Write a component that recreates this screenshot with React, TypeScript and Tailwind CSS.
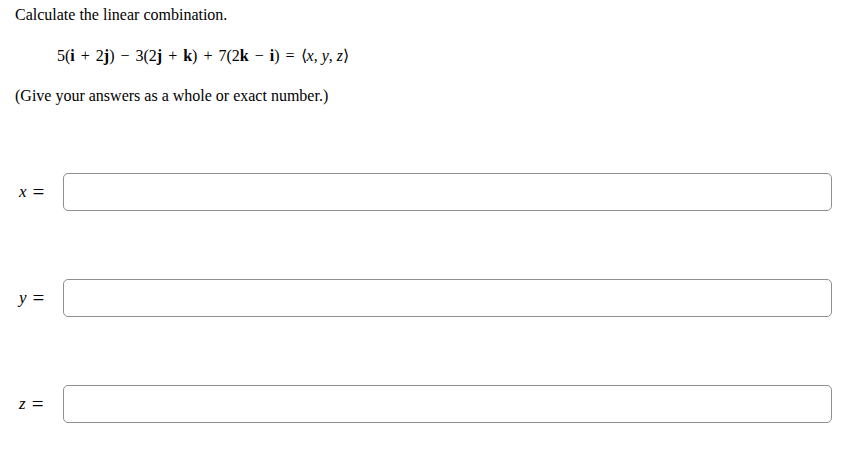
import React from 'react';

const serif = { fontFamily: '"Liberation Serif", "Times New Roman", serif' };

function Op({ c }: { c: string }) {
  return <span className="px-[6px]">{c}</span>;
}

function AnswerRow({ name }: { name: string }) {
  return (
    <div className="flex items-center">
      <div className="flex w-[63px] items-center pl-[19px] text-[17px] text-black">
        <i>{name}</i>
        <span className="ml-[6px] text-[21px] leading-none">=</span>
      </div>
      <input
        type="text"
        aria-label={name}
        className="h-[38px] w-[769px] rounded-[5px] border border-[#8f8f8f] bg-white px-2 outline-none"
      />
    </div>
  );
}

export default function App() {
  return (
    <div className="h-[472px] w-[845px] bg-white text-black" style={serif}>
      <div className="px-[15px] pt-[5px] text-[16px] leading-[20px]">
        <p>Calculate the linear combination.</p>
        {/* equation */}
        <p className="mt-[21px] pl-[42px] text-[16px]">
          5(<b>i</b>
          <Op c="+" />2<b>j</b>)<Op c="−" />3(2<b>j</b>
          <Op c="+" />
          <b>k</b>)<Op c="+" />7(2<b>k</b>
          <Op c="−" />
          <b>i</b>)<Op c="=" />⟨<i>x</i>,&nbsp;<i>y</i>,&nbsp;<i>z</i>⟩
        </p>
        <p className="mt-[20px]">(Give your answers as a whole or exact number.)</p>
      </div>

      <div className="mt-[67px] flex flex-col gap-[68px] pr-[12px]">
        <AnswerRow name="x" />
        <AnswerRow name="y" />
        <AnswerRow name="z" />
      </div>
    </div>
  );
}
